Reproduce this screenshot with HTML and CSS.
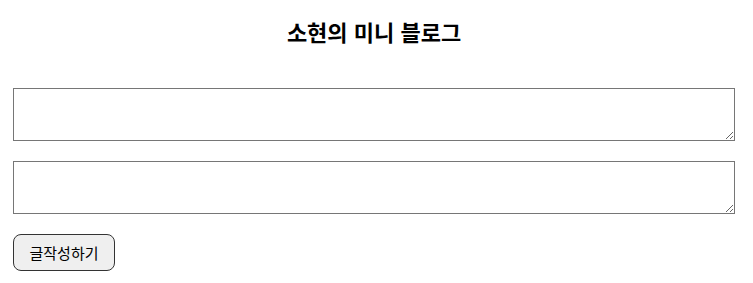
FILE: index.html
```html
<!DOCTYPE html>
<html lang="ko">
<head>
<meta charset="utf-8">
<link rel="stylesheet" href="styles.css">
</head>
<body>
<main class="page">
  <h1 class="title">소현의 미니 블로그</h1>
  <form class="form">
    <textarea class="field"></textarea>
    <textarea class="field"></textarea>
    <div><button type="button" class="btn">글작성하기</button></div>
  </form>
</main>
</body>
</html>
```
FILE: styles.css
```css
html, body {
  margin: 0;
  background: #fff;
  font-family: "Noto Sans CJK KR", "Noto Sans", sans-serif;
}
.page {
  padding: 0 18px 0 13px;
}
.title {
  margin: 0;
  padding-top: 15px;
  height: 34px;
  font-size: 22px;
  font-weight: 700;
  line-height: 32px;
  text-align: center;
  color: #000;
}
.form {
  display: flex;
  flex-direction: column;
  gap: 20px;
  margin-top: 39px;
}
.field {
  display: block;
  box-sizing: border-box;
  width: 100%;
  height: 53px;
  margin: 0;
  border: 1px solid #767676;
  resize: vertical;
}
.btn {
  box-sizing: border-box;
  width: 102px;
  height: 37px;
  border: 1px solid #333;
  border-radius: 8px;
  background: #efefef;
  font-family: "Noto Sans CJK KR", sans-serif;
  font-size: 15px;
  color: #000;
  padding: 0;
}
```
